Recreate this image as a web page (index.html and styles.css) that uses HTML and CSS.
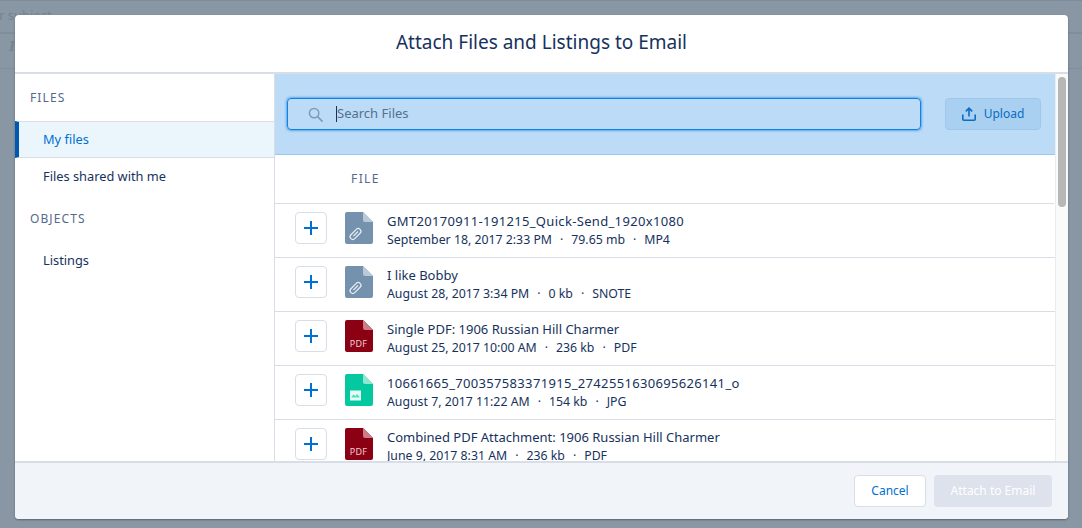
FILE: index.html
```html
<!DOCTYPE html>
<html lang="en">
<head>
<meta charset="utf-8">
<title>Attach Files and Listings to Email</title>
<link rel="stylesheet" href="styles.css">
</head>
<body>
<div class="backdrop">
  <div class="bg-subject">r subject</div>
  <div class="bg-toolbar"><span class="bg-italic">I</span></div>
</div>
<div class="modal">
  <header class="modal-head"><h1>Attach Files and Listings to Email</h1></header>
  <div class="modal-body">
    <nav class="side">
      <h2 class="side-title first">FILES</h2>
      <a class="side-item active">My files</a>
      <a class="side-item">Files shared with me</a>
      <h2 class="side-title second">OBJECTS</h2>
      <a class="side-item listings">Listings</a>
    </nav>
    <main class="content">
      <div class="search-bar">
        <div class="search-box">
          <svg class="search-icon" viewBox="0 0 16 16"><circle cx="6.5" cy="6.5" r="5" fill="none" stroke="currentColor" stroke-width="1.6"/><path d="M10.3 10.3 15 15" stroke="currentColor" stroke-width="1.8" stroke-linecap="round"/></svg>
          <span class="caret"></span><span class="placeholder">Search Files</span>
        </div>
        <button class="upload">
          <svg class="upload-icon" viewBox="0 0 14 14"><path d="M7 9.500V1.500M3.800 4.400 7 1.200l3.200 3.200" fill="none" stroke="currentColor" stroke-width="1.600"/><path d="M.8 7.500v4.700c0 .6.4 1 1 1h10.400c.6 0 1-.4 1-1V7.500" fill="none" stroke="currentColor" stroke-width="1.600"/></svg>
          <span class="upload-label">Upload</span>
        </button>
      </div>
      <div class="table-head">FILE</div>
      <ul class="rows">
        <li class="row">
          <button class="add"><svg viewBox="0 0 16 16"><path d="M8 1v14M1 8h14" stroke="currentColor" stroke-width="2"/></svg></button>
          <svg class="doc" viewBox="0 0 28 32"><path d="M2 0h16l10 10v20a2 2 0 0 1-2 2H2a2 2 0 0 1-2-2V2a2 2 0 0 1 2-2z" fill="#7492ad"/><path d="M18 0l10 10h-8a2 2 0 0 1-2-2z" fill="#bac9d6"/><g transform="rotate(45 10.500 22)" fill="none" stroke="#e8eef3" stroke-width="1.200"><rect x="7.800" y="15.500" width="5.400" height="13" rx="2.700"/><path d="M10.500 18.500v6.500"/></g></svg>
          <div class="info"><div class="name wide">GMT20170911-191215_Quick-Send_1920x1080</div><div class="meta">September 18, 2017 2:33 PM<i>·</i>79.65 mb<i>·</i>MP4</div></div>
        </li>
        <li class="row">
          <button class="add"><svg viewBox="0 0 16 16"><path d="M8 1v14M1 8h14" stroke="currentColor" stroke-width="2"/></svg></button>
          <svg class="doc" viewBox="0 0 28 32"><path d="M2 0h16l10 10v20a2 2 0 0 1-2 2H2a2 2 0 0 1-2-2V2a2 2 0 0 1 2-2z" fill="#7492ad"/><path d="M18 0l10 10h-8a2 2 0 0 1-2-2z" fill="#bac9d6"/><g transform="rotate(45 10.500 22)" fill="none" stroke="#e8eef3" stroke-width="1.200"><rect x="7.800" y="15.500" width="5.400" height="13" rx="2.700"/><path d="M10.500 18.500v6.500"/></g></svg>
          <div class="info"><div class="name">I like Bobby</div><div class="meta">August 28, 2017 3:34 PM<i>·</i>0 kb<i>·</i>SNOTE</div></div>
        </li>
        <li class="row">
          <button class="add"><svg viewBox="0 0 16 16"><path d="M8 1v14M1 8h14" stroke="currentColor" stroke-width="2"/></svg></button>
          <svg class="doc" viewBox="0 0 28 32"><path d="M2 0h16l10 10v20a2 2 0 0 1-2 2H2a2 2 0 0 1-2-2V2a2 2 0 0 1 2-2z" fill="#8c0014"/><path d="M18 0l10 10h-8a2 2 0 0 1-2-2z" fill="#cd7d85"/><text x="13.500" y="27" class="pdf">PDF</text></svg>
          <div class="info"><div class="name">Single PDF: 1906 Russian Hill Charmer</div><div class="meta">August 25, 2017 10:00 AM<i>·</i>236 kb<i>·</i>PDF</div></div>
        </li>
        <li class="row">
          <button class="add"><svg viewBox="0 0 16 16"><path d="M8 1v14M1 8h14" stroke="currentColor" stroke-width="2"/></svg></button>
          <svg class="doc" viewBox="0 0 28 32"><path d="M2 0h16l10 10v20a2 2 0 0 1-2 2H2a2 2 0 0 1-2-2V2a2 2 0 0 1 2-2z" fill="#04c9a0"/><path d="M18 0l10 10h-8a2 2 0 0 1-2-2z" fill="#90e6d2"/><path d="M5 16.500h11v10H5z" fill="#e6faf5"/><path d="M6.500 23.500v-1l2-2 2 1.500 1.500-2 2.500 2.500v1z" fill="#5ddcc0"/></svg>
          <div class="info"><div class="name wide">10661665_700357583371915_2742551630695626141_o</div><div class="meta">August 7, 2017 11:22 AM<i>·</i>154 kb<i>·</i>JPG</div></div>
        </li>
        <li class="row">
          <button class="add"><svg viewBox="0 0 16 16"><path d="M8 1v14M1 8h14" stroke="currentColor" stroke-width="2"/></svg></button>
          <svg class="doc" viewBox="0 0 28 32"><path d="M2 0h16l10 10v20a2 2 0 0 1-2 2H2a2 2 0 0 1-2-2V2a2 2 0 0 1 2-2z" fill="#8c0014"/><path d="M18 0l10 10h-8a2 2 0 0 1-2-2z" fill="#cd7d85"/><text x="13.500" y="27" class="pdf">PDF</text></svg>
          <div class="info"><div class="name">Combined PDF Attachment: 1906 Russian Hill Charmer</div><div class="meta">June 9, 2017 8:31 AM<i>·</i>236 kb<i>·</i>PDF</div></div>
        </li>
      </ul>
    </main>
    <div class="scrollbar"><div class="thumb"></div></div>
  </div>
  <footer class="modal-foot">
    <button class="btn cancel">Cancel</button>
    <button class="btn attach">Attach to Email</button>
  </footer>
</div>
</body>
</html>
```
FILE: styles.css
```css
* { box-sizing: border-box; }
html, body { margin: 0; height: 100%; }
body {
  width: 1082px;
  height: 528px;
  overflow: hidden;
  background: #8996a4;
  font-family: "Noto Sans", "Open Sans", sans-serif;
  font-size: 13px;
  color: #16325c;
  position: relative;
}
.backdrop { color: #77838f; }
.bg-subject { height: 33px; padding-top: 5px; font-size: 13px; margin-left: -1px; border-top: 1px solid #7f8c9a; border-bottom: 1px solid #808d9b; }
.bg-toolbar { height: 36px; padding: 4px 0 0 9px; border-top: 1px solid #808d9b; border-bottom: 1px solid #808d9b; font-family: "Liberation Serif", serif; font-style: italic; font-weight: bold; font-size: 15px; }
.modal {
  position: absolute;
  left: 15px; top: 15px;
  width: 1053px; height: 504px;
  background: #fff;
  border-radius: 4px;
  display: flex;
  flex-direction: column;
  overflow: hidden;
  box-shadow: 0 1px 2px rgba(40,50,60,.5);
}
.modal-head {
  height: 59px;
  flex: none;
  border-bottom: 2px solid #d8dde6;
  display: flex;
  align-items: center;
  justify-content: center;
}
.modal-head h1 { margin: 0 0 3px; font-size: 19px; font-weight: 400; color: #16325c; }
.modal-body { flex: 1; min-height: 0; display: flex; }
.side { width: 260px; flex: none; border-right: 1px solid #d8dde6; display: flex; flex-direction: column; }
.side-title { margin: 0; padding-left: 15px; font-size: 12px; font-weight: 400; letter-spacing: 1.1px; color: #54698d; }
.side-title.first { padding-top: 15px; height: 47px; }
.side-title.second { padding-top: 15px; height: 46px; }
.side-item { height: 37px; padding: 0 0 2px 28px; font-size: 12.800px; display: flex; align-items: center; color: #16325c; }
.side-item.active { color: #0070d2; background: #ebf6fc; border-top: 1px solid #d8dde6; border-bottom: 1px solid #d8dde6; border-left: 4px solid #0059ae; padding-left: 24px; }
.side-item.listings { height: 38px; padding-bottom: 0; }
.content { flex: 1; min-width: 0; overflow: hidden; }
.search-bar {
  height: 81px;
  background: #bcdbf6;
  border-bottom: 1px solid #99c7ee;
  display: flex;
  align-items: flex-start;
  padding: 24px 14px 0 12px;
}
.search-box {
  width: 634px; height: 32px;
  border: 1px solid #0a84e8;
  border-radius: 4px;
  box-shadow: 0 0 3px #0070d2;
  display: flex;
  align-items: center;
  padding-left: 20px;
  color: #5d7d9c;
}
.search-icon { width: 15px; height: 15px; color: #7c9cba; margin-right: 13px; }
.caret { width: 1px; height: 16px; background: #16325c; }
.placeholder { color: #54708f; padding-bottom: 2px; }
.upload {
  margin-left: auto;
  width: 96px; height: 32px;
  border: 1px solid #a0c6ea;
  border-radius: 4px;
  background: #a9d0f0;
  color: #0b6cc4;
  font: inherit;
  font-size: 12px;
  display: flex;
  align-items: center;
  justify-content: center;
  gap: 8px;
  padding: 0;
}
.upload-label { padding-bottom: 2px; }
.upload-icon { width: 14px; height: 14px; }
.table-head { height: 49px; padding: 15px 0 0 76px; font-size: 12px; letter-spacing: 1.4px; color: #54698d; border-bottom: 1px solid #d8dde6; margin-right: 1px; }
.rows { list-style: none; margin: 0; padding: 0; }
.row { height: 54px; border-bottom: 1px solid #d8dde6; display: flex; align-items: flex-start; padding: 8px 0 0 20px; }
.add { width: 32px; height: 32px; padding: 0; border: 1px solid #d8dde6; border-radius: 4px; background: #fff; color: #0070d2; display: flex; align-items: center; justify-content: center; }
.add svg { width: 16px; height: 16px; }
.doc { width: 28px; height: 32px; margin-left: 18px; flex: none; }
.pdf { font: 9px "Noto Sans", sans-serif; letter-spacing: .2px; fill: #f0d0d4; text-anchor: middle; }
.info { margin-left: 14px; }
.name { line-height: 18px; white-space: nowrap; }
.name.wide { letter-spacing: .33px; }
.meta { line-height: 18px; font-size: 12.300px; white-space: nowrap; margin-top: 1px; }
.meta i { font-style: normal; padding: 0 8px; }
.scrollbar { width: 13px; flex: none; background: #fafafa; border-left: 1px solid #ececec; padding: 3px 2px 0; }
.thumb { width: 8px; height: 130px; background: #b7b7b7; border-radius: 4px; }
.modal-foot {
  height: 58px;
  flex: none;
  background: #f1f4f8;
  border-top: 2px solid #d8dde6;
  display: flex;
  justify-content: flex-end;
  align-items: flex-start;
  gap: 8px;
  padding: 12px 16px 0 0;
}
.btn { height: 32px; border-radius: 4px; font: inherit; font-size: 12px; padding: 0 0 2px; }
.cancel { width: 72px; background: #fff; border: 1px solid #d8dde6; color: #0070d2; }
.attach { width: 118px; background: #dde2ec; border: 0; color: #fff; }
```
